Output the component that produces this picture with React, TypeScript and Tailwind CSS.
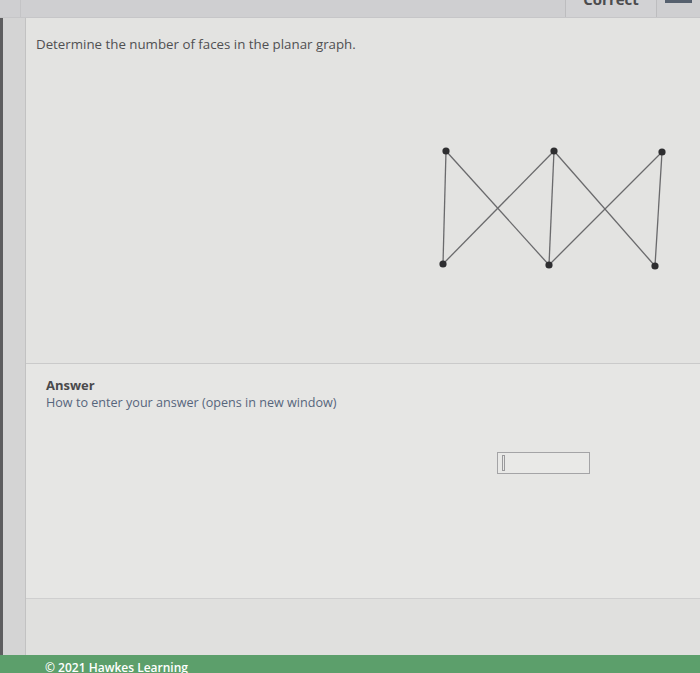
const font = { fontFamily: '"Open Sans", "Liberation Sans", sans-serif' };

// node positions of the planar graph, in svg coordinates
const nodes: Record<string, [number, number]> = {
  tl: [10, 11],
  tm: [118, 11],
  tr: [226, 12],
  bl: [7, 124],
  bm: [113, 125],
  br: [219, 126],
};

const edges: [string, string][] = [
  ["tl", "bl"],
  ["tl", "bm"],
  ["tm", "bl"],
  ["tm", "bm"],
  ["tm", "br"],
  ["tr", "bm"],
  ["tr", "br"],
];

function PlanarGraph() {
  return (
    <svg width="236" height="136" viewBox="0 0 236 136" className="block">
      {edges.map(([a, b]) => (
        <line
          key={a + b}
          x1={nodes[a][0]}
          y1={nodes[a][1]}
          x2={nodes[b][0]}
          y2={nodes[b][1]}
          stroke="#6a6a6c"
          strokeWidth="1.3"
        />
      ))}
      {Object.entries(nodes).map(([k, [x, y]]) => (
        <circle key={k} cx={x} cy={y} r="3.6" fill="#2e2e30" />
      ))}
    </svg>
  );
}

export default function App() {
  return (
    <div
      className="flex h-[673px] w-[700px] flex-col overflow-hidden bg-[#d3d3d3]"
      style={font}
    >
      {/* Top toolbar (cut off) */}
      <div className="flex h-[18px] shrink-0 items-end border-b border-[#c6c6c8] bg-[#cfcfd1]">
        <div className="ml-[20px] h-full w-px bg-[#c4c4c6]" />
        <div className="flex-1" />
        <div className="flex h-full w-[92px] items-end justify-center border-x border-[#bdbdbf] bg-[#d2d2d4]">
          <span className="mb-[10px] text-[15px] font-bold leading-none text-[#4c4c4e]">
            Correct
          </span>
        </div>
        <div className="flex h-full w-[43px] justify-center">
          <div className="h-[3px] w-[27px] bg-[#56606e]" />
        </div>
      </div>

      <div className="flex min-h-0 flex-1">
        {/* left rail */}
        <div className="w-[26px] shrink-0 border-l-[3px] border-r border-l-[#5d5d5f] border-r-[#c2c2c2] bg-[#d4d4d4]" />

        <div className="flex min-w-0 flex-1 flex-col bg-[#e3e3e1]">
          {/* Question */}
          <div className="h-[345px] shrink-0 pl-[10px] pt-[17px]">
            <p className="text-[13.3px] leading-[18px] text-[#505052]">
              Determine the number of faces in the planar graph.
            </p>
            <div className="ml-[400px] mt-[87px]">
              <PlanarGraph />
            </div>
          </div>

          {/* Answer */}
          <div className="flex h-[235px] shrink-0 flex-col border-t border-[#cacaca] bg-[#e6e6e4] pl-[20px] pt-[12px]">
            <p className="text-[13px] font-bold leading-[18px] text-[#4a4a4c]">Answer</p>
            <p className="text-[12.6px] leading-[18px] text-[#56657c]">
              How to enter your answer (opens in new window)
            </p>
            <div className="ml-[451px] mt-[40px] flex h-[22px] w-[93px] items-center border border-[#a4a4a6] bg-[#e9e9e7] pl-[4px]">
              <div className="h-[16px] w-[3px] border border-[#9a9a9c]" />
            </div>
          </div>

          {/* blank area */}
          <div className="flex-1 border-t border-[#cfcfcf] bg-[#e0e0de]" />
        </div>
      </div>

      {/* Footer */}
      <div className="flex h-[18px] shrink-0 items-start bg-[#5c9f6b] pl-[45px] pt-[7px]">
        <span className="text-[12px] font-semibold leading-none text-white">
          © 2021 Hawkes Learning
        </span>
      </div>
    </div>
  );
}
